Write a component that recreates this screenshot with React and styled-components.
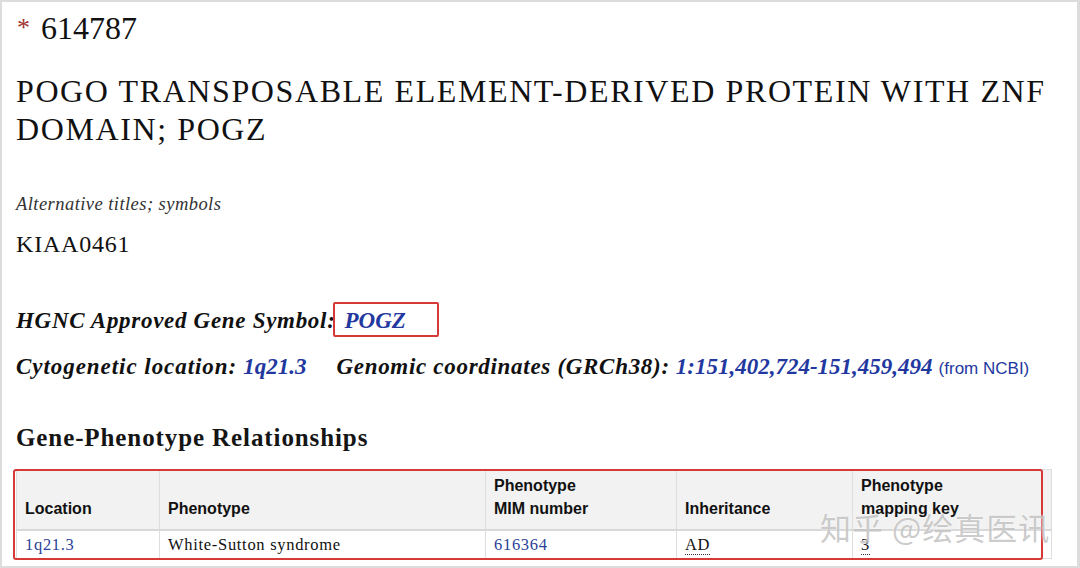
import styled, { createGlobalStyle } from "styled-components";

const GlobalStyle = createGlobalStyle`
  html, body {
    margin: 0;
    padding: 0;
    background: #ffffff;
  }
`;

const serif = `"Palatino Linotype", "Book Antiqua", Palatino, "Liberation Serif", serif`;
const sans = `Arial, "Liberation Sans", sans-serif`;

const Page = styled.div`
  position: relative;
  box-sizing: border-box;
  width: 1080px;
  height: 568px;
  border: 2px solid #dcdcdc;
  border-right-width: 3px;
  padding: 0 0 0 14px;
  font-family: ${serif};
  color: #111;
  overflow: hidden;
`;

const MimLine = styled.div`
  display: flex;
  align-items: baseline;
  gap: 11px;
  margin-top: 7px;
  height: 38px;
  font-size: 32px;
  line-height: 38px;
`;

const Star = styled.span`
  color: #a0302e;
  font-size: 26px;
  position: relative;
  top: -3px;
  margin-left: 1px;
`;

const Title = styled.h1`
  margin: 25px 0 0;
  font-size: 32px;
  line-height: 38px;
  font-weight: 400;
  letter-spacing: 1.6px;
`;

const SubLabel = styled.div`
  margin-top: 44px;
  font-size: 18.5px;
  line-height: 24px;
  font-style: italic;
  letter-spacing: 0.45px;
  color: #333;
`;

const Symbol = styled.div`
  margin-top: 13px;
  font-size: 24px;
  line-height: 30px;
  letter-spacing: 0.8px;
`;

const InfoLine = styled.div`
  display: flex;
  align-items: baseline;
  font-size: 23px;
  line-height: 30px;
  font-style: italic;
  font-weight: 700;
  margin-top: ${(p) => p.$top}px;
`;

const Label = styled.span`
  color: #111;
  letter-spacing: ${(p) => p.$ls ?? 0.7}px;
  margin-right: ${(p) => p.$gap ?? 6}px;
`;

const BlueLink = styled.span`
  color: #23389f;
  margin-right: ${(p) => p.$gap || 0}px;
`;

const Marked = styled.span`
  display: inline-flex;
  align-items: baseline;
  box-sizing: border-box;
  width: 106px;
  height: 35px;
  padding: 0 0 0 10px;
  margin-left: -3px;
  border: 2px solid #d73a36;
  border-radius: 2px;
  line-height: 33px;
`;

const Source = styled.span`
  font-family: ${sans};
  font-style: normal;
  font-weight: 400;
  font-size: 17px;
  color: #23389f;
`;

const Heading = styled.h2`
  margin: 39px 0 0;
  font-size: 25px;
  line-height: 30px;
  font-weight: 700;
  letter-spacing: 0.9px;
  color: #151515;
`;

const TableWrap = styled.div`
  position: relative;
  width: 1036px;
  margin-top: 16px;
`;

const RedFrame = styled.div`
  position: absolute;
  left: -3px;
  top: 0;
  width: 1030px;
  height: 91px;
  box-sizing: border-box;
  border: 2px solid #d73a36;
  border-radius: 3px;
  pointer-events: none;
`;

const Table = styled.table`
  width: 100%;
  border-collapse: collapse;
  border: 1px solid #dedede;
`;

const Th = styled.th`
  background: #f2f2f2;
  font-family: ${sans};
  font-size: 16px;
  font-weight: 700;
  color: #111;
  text-align: left;
  vertical-align: bottom;
  line-height: 23px;
  padding: 2px 8px 9px;
  height: 48px;
  width: ${(p) => p.$w}px;
  border-left: 1px solid #dedede;
  border-bottom: 2px solid #d8d8d8;
`;

const Td = styled.td`
  font-family: ${serif};
  font-size: 16.5px;
  letter-spacing: 0.7px;
  color: ${(p) => (p.$link ? "#2c3f99" : "#111")};
  padding: 2px 8px 2px;
  height: 23px;
  line-height: 22px;
  border-left: 1px solid #dedede;
  border-bottom: 1px solid #dedede;
`;

const Abbr = styled.span`
  border-bottom: 1px dotted #333;
`;

const Watermark = styled.div`
  position: absolute;
  left: 818px;
  top: 502px;
  font-family: "Noto Sans CJK SC", sans-serif;
  font-size: 31px;
  letter-spacing: 1px;
  color: rgba(160, 160, 160, 0.55);
  text-shadow: 0 0 2px rgba(255, 255, 255, 0.9);
  pointer-events: none;
`;

export default function App() {
  return (
    <>
      <GlobalStyle />
      <Page>
        <MimLine>
          <Star>*</Star>
          <span>614787</span>
        </MimLine>
        <Title>
          POGO TRANSPOSABLE ELEMENT-DERIVED PROTEIN WITH ZNF
          <br />
          DOMAIN; POGZ
        </Title>
        <SubLabel>Alternative titles; symbols</SubLabel>
        <Symbol>KIAA0461</Symbol>
        <InfoLine $top={43}>
          <Label $gap={0}>HGNC Approved Gene Symbol:</Label>
          <Marked>
            <BlueLink>POGZ</BlueLink>
          </Marked>
        </InfoLine>
        <InfoLine $top={15}>
          <Label $ls={0.95}>Cytogenetic location:</Label>
          <BlueLink $gap={30}>1q21.3</BlueLink>
          <Label>Genomic coordinates (GRCh38):</Label>
          <BlueLink $gap={6}>1:151,402,724-151,459,494</BlueLink>
          <Source>(from NCBI)</Source>
        </InfoLine>
        <Heading>Gene-Phenotype Relationships</Heading>
        <TableWrap>
          <Table>
            <thead>
              <tr>
                <Th $w={126}>Location</Th>
                <Th $w={309}>Phenotype</Th>
                <Th $w={174}>
                  Phenotype
                  <br />
                  MIM number
                </Th>
                <Th $w={159}>Inheritance</Th>
                <Th>
                  Phenotype
                  <br />
                  mapping key
                </Th>
              </tr>
            </thead>
            <tbody>
              <tr>
                <Td $link>1q21.3</Td>
                <Td>White-Sutton syndrome</Td>
                <Td $link>616364</Td>
                <Td>
                  <Abbr>AD</Abbr>
                </Td>
                <Td>
                  <Abbr>3</Abbr>
                </Td>
              </tr>
            </tbody>
          </Table>
          <RedFrame />
        </TableWrap>
        <Watermark>知乎 @绘真医讯</Watermark>
      </Page>
    </>
  );
}
